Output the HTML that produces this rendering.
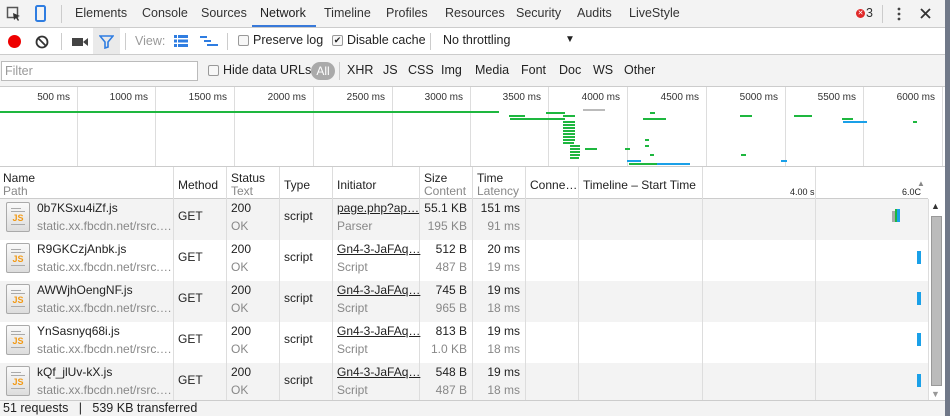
<!DOCTYPE html>
<html><head><style>
*{box-sizing:border-box;margin:0;padding:0}
body{width:950px;height:416px;overflow:hidden;background:#fff;font-family:"Liberation Sans","DejaVu Sans",sans-serif;font-size:12px;color:#222;position:relative}
.a{position:absolute}
.tabs{left:0;top:0;width:945px;height:28px;background:#f3f3f3;border-bottom:1px solid #ccc}
.tab{position:absolute;top:6px;font-size:12.5px;color:#333}
.tb{left:0;top:28px;width:945px;height:27px;background:#fff;border-bottom:1px solid #ccc}
.fb{left:0;top:55px;width:945px;height:32px;background:#f3f3f3;border-bottom:1px solid #ccc}
.t{position:absolute;white-space:nowrap}
.cb{position:absolute;width:11px;height:11px;border:1px solid #999;border-radius:2px;background:#f7f7f7}
.vl{position:absolute;width:1px;background:#ddd}
.bar{position:absolute;height:2px;background:#1eb73f}
.b{background:#1aa0e8}
.row{position:absolute;left:0;width:928px;height:41px}
.g{color:#888}
</style></head><body>
<!-- tab bar -->
<div class="a tabs">
<svg class="a" style="left:6px;top:6px" width="16" height="16"><rect x="1.5" y="1.5" width="10" height="10" fill="none" stroke="#555" stroke-width="1.5"/><path d="M7 7 L14 10 L11 11 L13 14 L12 15 L10 12 L8 14Z" fill="#333"/></svg>
<svg class="a" style="left:35px;top:5px" width="12" height="17"><rect x="1" y="1" width="9" height="15" rx="1.5" fill="none" stroke="#2f7de1" stroke-width="2"/></svg>
<div class="vl" style="left:61px;top:5px;height:18px;background:#ccc"></div>
<span class="tab" style="left:75px">Elements</span>
<span class="tab" style="left:142px">Console</span>
<span class="tab" style="left:201px">Sources</span>
<span class="tab" style="left:260px;color:#222">Network</span>
<div class="a" style="left:252px;top:25px;width:64px;height:2px;background:#3879d9"></div>
<span class="tab" style="left:324px">Timeline</span>
<span class="tab" style="left:386px">Profiles</span>
<span class="tab" style="left:445px">Resources</span>
<span class="tab" style="left:516px">Security</span>
<span class="tab" style="left:577px">Audits</span>
<span class="tab" style="left:629px">LiveStyle</span>
<div class="a" style="left:856px;top:9px;width:9px;height:9px;border-radius:50%;background:#e02929;color:#fff;font-size:7px;line-height:9px;text-align:center;font-weight:bold">✕</div>
<span class="tab" style="left:866px">3</span>
<div class="vl" style="left:882px;top:5px;height:18px;background:#ccc"></div>
<svg class="a" style="left:896px;top:7px" width="6" height="14"><circle cx="3" cy="2" r="1.4" fill="#444"/><circle cx="3" cy="7" r="1.4" fill="#444"/><circle cx="3" cy="12" r="1.4" fill="#444"/></svg>
<svg class="a" style="left:920px;top:8px" width="11" height="11"><path d="M1 1L10 10M10 1L1 10" stroke="#333" stroke-width="1.8"/></svg>
</div>
<!-- toolbar -->
<div class="a tb">
<div class="a" style="left:8px;top:7px;width:13px;height:13px;border-radius:50%;background:#e00"></div>
<svg class="a" style="left:35px;top:7px" width="14" height="14"><circle cx="7" cy="7" r="5.5" fill="none" stroke="#333" stroke-width="1.8"/><path d="M3 3L11 11" stroke="#333" stroke-width="1.8"/></svg>
<div class="vl" style="left:61px;top:5px;height:17px;background:#ccc"></div>
<svg class="a" style="left:72px;top:9px" width="16" height="10"><rect x="0" y="1" width="11" height="8" fill="#444"/><path d="M11 5L16 1V9Z" fill="#444"/></svg>
<div class="a" style="left:93px;top:0;width:27px;height:26px;background:#eaeaea"></div>
<svg class="a" style="left:99px;top:7px" width="15" height="14"><path d="M1 1H14L9 7V12L6 13V7Z" fill="none" stroke="#2f7de1" stroke-width="1.6"/></svg>
<div class="vl" style="left:125px;top:5px;height:17px;background:#ccc"></div>
<span class="t" style="left:135px;top:6px;color:#999;font-size:12.5px">View:</span>
<svg class="a" style="left:174px;top:7px" width="15" height="12"><g fill="#2f7de1"><rect x="0" y="0" width="3" height="3"/><rect x="0" y="4.5" width="3" height="3"/><rect x="0" y="9" width="3" height="3"/><rect x="4" y="0" width="10" height="3"/><rect x="4" y="4.5" width="10" height="3"/><rect x="4" y="9" width="10" height="3"/></g></svg>
<svg class="a" style="left:200px;top:8px" width="18" height="11"><g fill="#2f7de1"><rect x="0" y="0" width="7" height="2"/><rect x="4" y="4" width="7" height="2"/><rect x="7" y="8" width="11" height="2"/></g></svg>
<div class="vl" style="left:227px;top:5px;height:17px;background:#ccc"></div>
<div class="cb" style="left:238px;top:7px"></div>
<span class="t" style="left:253px;top:5px;font-size:12.5px">Preserve log</span>
<div class="cb" style="left:332px;top:7px;font-size:9px;line-height:9px;text-align:center">✔</div>
<span class="t" style="left:347px;top:5px;font-size:12.5px">Disable cache</span>
<div class="vl" style="left:430px;top:5px;height:17px;background:#ccc"></div>
<span class="t" style="left:443px;top:5px;font-size:12.5px">No throttling</span>
<span class="t" style="left:565px;top:6px;font-size:10px">▼</span>
</div>
<!-- filter bar -->
<div class="a fb">
<div class="a" style="left:1px;top:6px;width:197px;height:20px;background:#fff;border:1px solid #bbb"></div>
<span class="t" style="left:5px;top:9px;color:#999;font-size:12.5px">Filter</span>
<div class="cb" style="left:208px;top:10px"></div>
<span class="t" style="left:223px;top:8px;font-size:12.5px">Hide data URLs</span>
<div class="a" style="left:311px;top:7px;width:24px;height:18px;border-radius:9px;background:#aaa;color:#fff;text-align:center;line-height:18px;font-size:12px">All</div>
<div class="vl" style="left:339px;top:7px;height:18px;background:#ccc"></div>
<span class="t" style="left:347px;top:8px;font-size:12.5px">XHR</span>
<span class="t" style="left:383px;top:8px;font-size:12.5px">JS</span>
<span class="t" style="left:408px;top:8px;font-size:12.5px">CSS</span>
<span class="t" style="left:441px;top:8px;font-size:12.5px">Img</span>
<span class="t" style="left:475px;top:8px;font-size:12.5px">Media</span>
<span class="t" style="left:521px;top:8px;font-size:12.5px">Font</span>
<span class="t" style="left:559px;top:8px;font-size:12.5px">Doc</span>
<span class="t" style="left:593px;top:8px;font-size:12.5px">WS</span>
<span class="t" style="left:624px;top:8px;font-size:12.5px">Other</span>
</div>
<!-- overview -->
<div class="a" style="left:0;top:87px;width:945px;height:80px;border-bottom:1px solid #ccc;overflow:hidden">
<div class="vl" style="left:77px;top:0;height:80px"></div><span class="t" style="right:875px;top:5px;font-size:10px;color:#333">500 ms</span>
<div class="vl" style="left:155px;top:0;height:80px"></div><span class="t" style="right:797px;top:5px;font-size:10px;color:#333">1000 ms</span>
<div class="vl" style="left:234px;top:0;height:80px"></div><span class="t" style="right:718px;top:5px;font-size:10px;color:#333">1500 ms</span>
<div class="vl" style="left:313px;top:0;height:80px"></div><span class="t" style="right:639px;top:5px;font-size:10px;color:#333">2000 ms</span>
<div class="vl" style="left:392px;top:0;height:80px"></div><span class="t" style="right:560px;top:5px;font-size:10px;color:#333">2500 ms</span>
<div class="vl" style="left:470px;top:0;height:80px"></div><span class="t" style="right:482px;top:5px;font-size:10px;color:#333">3000 ms</span>
<div class="vl" style="left:548px;top:0;height:80px"></div><span class="t" style="right:404px;top:5px;font-size:10px;color:#333">3500 ms</span>
<div class="vl" style="left:627px;top:0;height:80px"></div><span class="t" style="right:325px;top:5px;font-size:10px;color:#333">4000 ms</span>
<div class="vl" style="left:706px;top:0;height:80px"></div><span class="t" style="right:246px;top:5px;font-size:10px;color:#333">4500 ms</span>
<div class="vl" style="left:785px;top:0;height:80px"></div><span class="t" style="right:167px;top:5px;font-size:10px;color:#333">5000 ms</span>
<div class="vl" style="left:863px;top:0;height:80px"></div><span class="t" style="right:89px;top:5px;font-size:10px;color:#333">5500 ms</span>
<div class="vl" style="left:942px;top:0;height:80px"></div><span class="t" style="right:10px;top:5px;font-size:10px;color:#333">6000 ms</span>
<div class="bar" style="left:0;width:499px;top:24px"></div>
<div class="bar" style="left:546px;width:19px;top:25px"></div>
<div class="bar" style="left:509px;width:16px;top:28px"></div>
<div class="bar" style="left:563px;width:12px;top:28px"></div>
<div class="bar" style="left:510px;width:55px;top:31px"></div>
<div class="bar" style="left:563px;width:12px;top:34px"></div>
<div class="bar" style="left:563px;width:12px;top:37px"></div>
<div class="bar" style="left:563px;width:12px;top:40px"></div>
<div class="bar" style="left:563px;width:12px;top:43px"></div>
<div class="bar" style="left:563px;width:12px;top:46px"></div>
<div class="bar" style="left:563px;width:12px;top:49px"></div>
<div class="bar" style="left:563px;width:12px;top:52px"></div>
<div class="bar" style="left:563px;width:11px;top:55px"></div>
<div class="bar" style="left:570px;width:10px;top:58px"></div>
<div class="bar" style="left:570px;width:10px;top:61px"></div>
<div class="bar" style="left:570px;width:10px;top:64px"></div>
<div class="bar" style="left:570px;width:10px;top:67px"></div>
<div class="bar" style="left:570px;width:9px;top:70px"></div>
<div class="bar" style="left:585px;width:12px;top:61px"></div>
<div class="bar" style="left:625px;width:5px;top:61px"></div>
<div class="bar" style="left:583px;width:22px;top:22px;background:#bbb"></div>
<div class="bar" style="left:650px;width:5px;top:25px"></div>
<div class="bar" style="left:643px;width:23px;top:31px"></div>
<div class="bar" style="left:645px;width:4px;top:52px"></div>
<div class="bar" style="left:645px;width:4px;top:58px"></div>
<div class="bar" style="left:650px;width:4px;top:67px"></div>
<div class="bar b" style="left:627px;width:14px;top:73px"></div>
<div class="bar" style="left:629px;width:28px;top:76px"></div><div class="bar b" style="left:657px;width:33px;top:76px"></div>
<div class="bar" style="left:740px;width:12px;top:28px"></div>
<div class="bar" style="left:794px;width:18px;top:28px"></div>
<div class="bar" style="left:842px;width:11px;top:31px"></div>
<div class="bar b" style="left:843px;width:24px;top:34px"></div>
<div class="bar" style="left:913px;width:4px;top:34px"></div>
<div class="bar" style="left:741px;width:5px;top:67px"></div>
<div class="bar b" style="left:781px;width:6px;top:73px"></div>
</div>
<!-- header -->
<div class="a" style="left:0;top:167px;width:928px;height:32px;background:#fff;border-bottom:1px solid #ccc"></div>
<span class="t" style="left:3px;top:171px">Name</span><span class="t g" style="left:3px;top:184px">Path</span>
<span class="t" style="left:178px;top:178px">Method</span>
<span class="t" style="left:231px;top:171px">Status</span><span class="t g" style="left:231px;top:184px">Text</span>
<span class="t" style="left:284px;top:178px">Type</span>
<span class="t" style="left:337px;top:178px">Initiator</span>
<span class="t" style="left:424px;top:171px">Size</span><span class="t g" style="left:424px;top:184px">Content</span>
<span class="t" style="left:477px;top:171px">Time</span><span class="t g" style="left:477px;top:184px">Latency</span>
<span class="t" style="left:530px;top:178px">Conne…</span>
<span class="t" style="left:583px;top:178px">Timeline – Start Time</span>
<span class="t" style="left:790px;top:187px;font-size:9px">4.00 s</span>
<span class="t" style="left:902px;top:187px;font-size:9px">6.0C</span>
<span class="t" style="left:917px;top:179px;font-size:8px;color:#888">▲</span>
<!-- rows -->
<div class="row" style="top:199px;background:#f3f3f3"></div>
<div class="row" style="top:240px;background:#fff"></div>
<div class="row" style="top:281px;background:#f3f3f3"></div>
<div class="row" style="top:322px;background:#fff"></div>
<div class="row" style="top:363px;background:#f3f3f3"></div>
<!-- column lines -->
<div class="vl" style="left:173px;top:167px;height:233px"></div>
<div class="vl" style="left:226px;top:167px;height:233px"></div>
<div class="vl" style="left:279px;top:167px;height:233px"></div>
<div class="vl" style="left:332px;top:167px;height:233px"></div>
<div class="vl" style="left:419px;top:167px;height:233px"></div>
<div class="vl" style="left:472px;top:167px;height:233px"></div>
<div class="vl" style="left:525px;top:167px;height:233px"></div>
<div class="vl" style="left:578px;top:167px;height:233px"></div>
<div class="vl" style="left:702px;top:167px;height:233px"></div>
<div class="vl" style="left:815px;top:167px;height:233px"></div>
<div id="rows"></div>
<script>
var d=[["0b7KSxu4iZf.js","page.php?ap…","Parser","55.1 KB","195 KB","151 ms","91 ms"],
["R9GKCzjAnbk.js","Gn4-3-JaFAq…","Script","512 B","487 B","20 ms","19 ms"],
["AWWjhOengNF.js","Gn4-3-JaFAq…","Script","745 B","965 B","19 ms","18 ms"],
["YnSasnyq68i.js","Gn4-3-JaFAq…","Script","813 B","1.0 KB","19 ms","18 ms"],
["kQf_jlUv-kX.js","Gn4-3-JaFAq…","Script","548 B","487 B","19 ms","18 ms"]];
var h="";
d.forEach(function(r,i){var y=199+i*41;
h+='<div class="a" style="left:6px;top:'+(y+3)+'px;width:24px;height:30px;border:1px solid #aaa;background:linear-gradient(#fafafa,#ddd);border-radius:2px"><div style="margin:5px 4px 0;height:1px;background:#aaa;width:10px"></div><div style="margin:2px 4px 0;height:1px;background:#aaa;width:14px"></div><div style="text-align:center;color:#f29a16;font-weight:bold;font-size:9px;margin-top:1px">JS</div><div style="margin:1px 4px 0;height:1px;background:#aaa;width:14px"></div></div>';
h+='<span class="t" style="left:37px;top:'+(y+2)+'px">'+r[0]+'</span><span class="t g" style="left:37px;top:'+(y+20)+'px">static.xx.fbcdn.net/rsrc.…</span>';
h+='<span class="t" style="left:178px;top:'+(y+10)+'px">GET</span>';
h+='<span class="t" style="left:231px;top:'+(y+2)+'px">200</span><span class="t g" style="left:231px;top:'+(y+20)+'px">OK</span>';
h+='<span class="t" style="left:284px;top:'+(y+10)+'px">script</span>';
h+='<span class="t" style="left:337px;top:'+(y+2)+'px;text-decoration:underline">'+r[1]+'</span><span class="t g" style="left:337px;top:'+(y+20)+'px">'+r[2]+'</span>';
h+='<span class="t" style="right:483px;top:'+(y+2)+'px">'+r[3]+'</span><span class="t g" style="right:483px;top:'+(y+20)+'px">'+r[4]+'</span>';
h+='<span class="t" style="right:430px;top:'+(y+2)+'px">'+r[5]+'</span><span class="t g" style="right:430px;top:'+(y+20)+'px">'+r[6]+'</span>';
if(i==0){h+='<div class="a" style="left:892px;top:'+(y+12)+'px;width:3px;height:11px;background:#aaa"></div><div class="a" style="left:895px;top:'+(y+10)+'px;width:2px;height:13px;background:#1eb73f"></div><div class="a" style="left:897px;top:'+(y+10)+'px;width:3px;height:13px;background:#1aa0e8"></div>';}
else h+='<div class="a" style="left:917px;top:'+(y+11)+'px;width:4px;height:13px;background:#1aa0e8"></div>';
});
document.getElementById("rows").innerHTML=h;
</script>
<!-- scrollbar -->
<div class="a" style="left:928px;top:199px;width:17px;height:201px;background:#fff;border-left:1px solid #ddd"></div>
<span class="t" style="left:931px;top:201px;font-size:9px;color:#333">▲</span>
<div class="a" style="left:931px;top:216px;width:11px;height:170px;background:#bbb;border:1px solid #999"></div>
<span class="t" style="left:931px;top:389px;font-size:9px;color:#999">▼</span>
<!-- status -->
<div class="a" style="left:0;top:400px;width:945px;height:16px;background:#f3f3f3;border-top:1px solid #ccc"></div>
<span class="t" style="left:3px;top:401px;font-size:12.5px">51 requests &nbsp;&nbsp;|&nbsp;&nbsp; 539 KB transferred</span>
<div class="a" style="left:945px;top:0;width:5px;height:416px;background:#707888"></div>
</body></html>
